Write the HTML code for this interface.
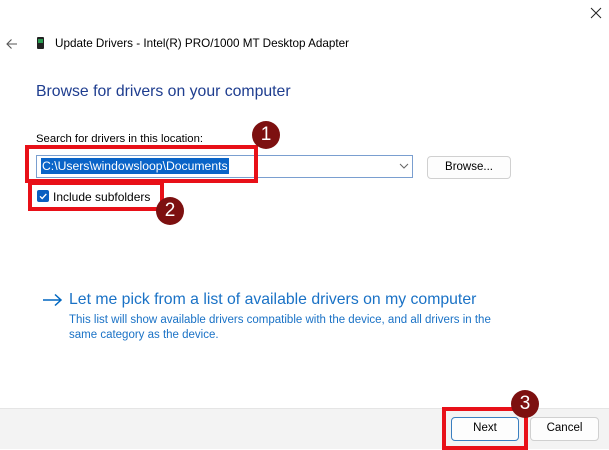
<!DOCTYPE html>
<html><head><style>
body{margin:0;width:609px;height:448px;background:#fff;position:relative;overflow:hidden;font-family:"Liberation Sans",sans-serif;color:#000}
.a{position:absolute;white-space:nowrap}
.red{position:absolute;border:4px solid #e81018;box-sizing:border-box}
.c{position:absolute;width:28px;height:28px;border-radius:50%;background:#7d1010;color:#fff;font-size:19px;text-align:center;line-height:28px}
.btn{position:absolute;background:#fdfdfd;border:1px solid #d0d0d0;border-radius:4px;box-sizing:border-box;font-size:11.5px;text-align:center;line-height:21px}
</style></head><body>
<svg class="a" style="left:5px;top:37px" width="14" height="14"><path d="M12 7H2M6.5 2.5L2 7l4.5 4.5" stroke="#555" stroke-width="1.1" fill="none"/></svg>
<div class="a" style="left:37px;top:37px;width:7px;height:12px;background:#222;border-radius:1px"></div>
<div class="a" style="left:38px;top:39px;width:5px;height:4px;background:#2a9a50"></div>
<div class="a" style="left:55px;top:37px;font-size:11.7px">Update Drivers - Intel(R) PRO/1000 MT Desktop Adapter</div>
<svg class="a" style="left:589px;top:6px" width="14" height="14"><path d="M2 2L12 12M12 2L2 12" stroke="#222" stroke-width="1"/></svg>
<div class="a" style="left:36px;top:83px;font-size:15.8px;color:#1e3d8f">Browse for drivers on your computer</div>
<div class="a" style="left:36px;top:133px;font-size:11.3px">Search for drivers in this location:</div>
<div class="a" style="left:36px;top:155px;width:377px;height:23px;border:1px solid #7a9fd0;box-sizing:border-box;background:#fff"></div>
<div class="a" style="left:41px;top:158px;font-size:12.2px;background:#0a64c8;color:#fff;padding:1px 1px;line-height:14px">C:\Users\windowsloop\Documents</div>
<svg class="a" style="left:399px;top:162px" width="10" height="8"><path d="M1 2l4 4 4-4" stroke="#666" fill="none"/></svg>
<div class="btn" style="left:427px;top:156px;width:84px;height:23px">Browse...</div>
<div class="a" style="left:37px;top:190px;width:12px;height:12px;background:#0a5fc0;border-radius:2px"></div>
<svg class="a" style="left:37px;top:190px" width="12" height="12"><path d="M3 6.3l2.2 2.2L9.3 4" stroke="#fff" stroke-width="1.3" fill="none"/></svg>
<div class="a" style="left:53px;top:190px;font-size:12px">Include subfolders</div>
<div class="red" style="left:25px;top:145px;width:233px;height:38px"></div>
<div class="red" style="left:28px;top:181px;width:136px;height:30px"></div>
<div class="c" style="left:252px;top:121px">1</div>
<div class="c" style="left:156px;top:197px">2</div>
<svg class="a" style="left:42px;top:293px" width="22" height="14"><path d="M1 7h18M13 1.5L19 7l-6 5.5" stroke="#0067c0" stroke-width="1.5" fill="none"/></svg>
<div class="a" style="left:69px;top:291px;font-size:15.8px;color:#1a72c6">Let me pick from a list of available drivers on my computer</div>
<div class="a" style="left:69px;top:313px;font-size:11.5px;line-height:15px;color:#1a72c6;white-space:normal;width:445px">This list will show available drivers compatible with the device, and all drivers in the same category as the device.</div>
<div class="a" style="left:0;top:408px;width:609px;height:40px;background:#f3f3f3;border-top:1px solid #e5e5e5"></div>
<div class="btn" style="left:451px;top:417px;width:68px;height:24px;border-color:#3a7fc0">Next</div>
<div class="btn" style="left:530px;top:417px;width:69px;height:24px">Cancel</div>
<div class="red" style="left:442px;top:407px;width:86px;height:43px"></div>
<div class="c" style="left:511px;top:390px">3</div>
</body></html>
